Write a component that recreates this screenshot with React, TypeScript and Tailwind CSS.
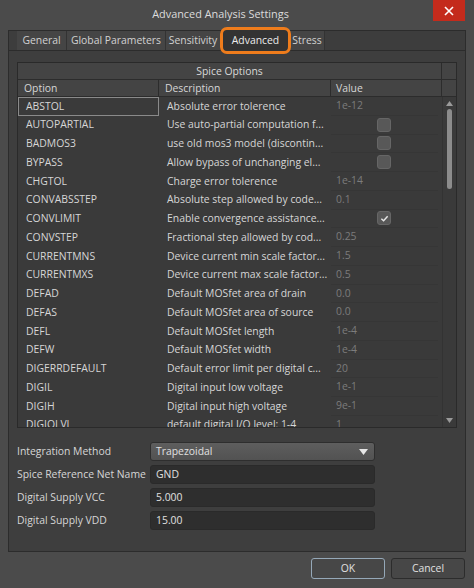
type Row = {
  name: string;
  desc: string;
  value?: string;
  check?: "on" | "off";
};

const rows: Row[] = [
  { name: "ABSTOL", desc: "Absolute error tolerence", value: "1e-12" },
  { name: "AUTOPARTIAL", desc: "Use auto-partial computation f...", check: "off" },
  { name: "BADMOS3", desc: "use old mos3 model (discontin...", check: "off" },
  { name: "BYPASS", desc: "Allow bypass of unchanging el...", check: "off" },
  { name: "CHGTOL", desc: "Charge error tolerence", value: "1e-14" },
  { name: "CONVABSSTEP", desc: "Absolute step allowed by code...", value: "0.1" },
  { name: "CONVLIMIT", desc: "Enable convergence assistance...", check: "on" },
  { name: "CONVSTEP", desc: "Fractional step allowed by cod...", value: "0.25" },
  { name: "CURRENTMNS", desc: "Device current min scale factor...", value: "1.5" },
  { name: "CURRENTMXS", desc: "Device current max scale factor...", value: "0.5" },
  { name: "DEFAD", desc: "Default MOSfet area of drain", value: "0.0" },
  { name: "DEFAS", desc: "Default MOSfet area of source", value: "0.0" },
  { name: "DEFL", desc: "Default MOSfet length", value: "1e-4" },
  { name: "DEFW", desc: "Default MOSfet width", value: "1e-4" },
  { name: "DIGERRDEFAULT", desc: "Default error limit per digital c...", value: "20" },
  { name: "DIGIL", desc: "Digital input low voltage", value: "1e-1" },
  { name: "DIGIH", desc: "Digital input high voltage", value: "9e-1" },
  { name: "DIGIOLVL", desc: "default digital I/O level: 1-4", value: "1" },
];

// tab label + fixed width, as measured off the dialog
const tabs: [string, string][] = [
  ["General", "w-[50px]"],
  ["Global Parameters", "w-[99px]"],
  ["Sensitivity", "w-[55px]"],
  ["Advanced", "w-[65px]"],
  ["Stress", "w-[35px]"],
];

function CheckBox({ on }: { on: boolean }) {
  return (
    <div className="w-[14px] h-[14px] rounded-[3px] bg-[#585858] border border-[#666] flex items-center justify-center">
      {on && (
        <svg width="9" height="9" viewBox="0 0 10 10" fill="none">
          <path d="M1.5 5.2 L4 7.5 L8.5 2.5" stroke="#e6e6e6" strokeWidth="1.6" />
        </svg>
      )}
    </div>
  );
}

export default function App() {
  return (
    <div
      className="w-[474px] h-[588px] bg-[#4b4b4b] flex flex-col text-[10.4px] text-[#d6d6d6] overflow-hidden"
      style={{ fontFamily: '"Open Sans", "Noto Sans", sans-serif' }}
    >
      {/* title bar */}
      <div className="h-[30px] flex items-start shrink-0">
        <div className="flex-1 text-center pt-[6px] text-[10.9px] text-[#dcdcdc] pl-[8px]">
          Advanced Analysis Settings
        </div>
        <div className="w-[32px] h-[21px] bg-[#c42b1c] flex items-center justify-center mr-[9px]">
          <svg width="10" height="10" viewBox="0 0 10 10">
            <path d="M1 1 L9 9 M9 1 L1 9" stroke="#fff" strokeWidth="1.6" />
          </svg>
        </div>
      </div>

      {/* tab strip */}
      <div className="mx-[8px] h-[20px] shrink-0 bg-[#3d3d3d] border-t border-x border-[#2c2c2c] flex items-stretch pl-[8px]">
        {tabs.map(([t, w]) => {
          const active = t === "Advanced";
          return active ? (
            <div
              key={t}
              className={`${w} relative ml-[2px] mr-[2px] -mt-[1px] -mb-[1px] flex items-center justify-center bg-[#333] text-[#ececec] outline-[3px] outline-[#ee7c1c] rounded-[4px] outline z-10`}
            >
              {t}
            </div>
          ) : (
            <div
              key={t}
              className={`${w} flex items-center justify-center bg-[#454545] border-r border-[#333] text-[#d2d2d2] whitespace-nowrap`}
            >
              {t}
            </div>
          );
        })}
      </div>

      {/* content panel */}
      <div className="mx-[8px] h-[502px] shrink-0 bg-[#3e3e3e] border border-[#2c2c2c] flex flex-col px-[8px] pt-[11px]">
        {/* table */}
        <div className="h-[366px] bg-[#3a3a3a] border border-[#2a2a2a] flex flex-col overflow-hidden">
          <div className="h-[17px] shrink-0 flex bg-[#444] border-b border-[#2c2c2c]">
            <div className="flex-1 text-center leading-[16px] text-[#d8d8d8] border-r border-[#2c2c2c]">
              Spice Options
            </div>
            <div className="w-[14px]" />
          </div>
          <div className="h-[17px] shrink-0 flex bg-[#444] border-b border-[#2c2c2c] leading-[16px]">
            <div className="w-[141px] pl-[6px] border-r border-[#2c2c2c]">Option</div>
            <div className="w-[172px] pl-[6px] border-r border-[#2c2c2c]">Description</div>
            <div className="flex-1 pl-[5px] border-r border-[#2c2c2c]">Value</div>
            <div className="w-[14px]" />
          </div>
          <div className="flex flex-1 min-h-0">
            <div className="flex-1 flex flex-col">
              {rows.map((r, i) => (
                <div key={r.name} className="h-[18.75px] shrink-0 flex items-center">
                  <div
                    className={
                      i === 0
                        ? "w-[141px] h-full pl-[7px] flex items-center border border-[#8a8a8a]"
                        : "w-[141px] h-full pl-[8px] flex items-center"
                    }
                  >
                    {r.name}
                  </div>
                  <div className="w-[172px] pl-[8px] whitespace-nowrap">{r.desc}</div>
                  <div className="flex-1 h-full pl-[5px] flex items-center border-b border-[#363636] mr-[4px]">
                    {r.check ? (
                      <div className="ml-[41px]">
                        <CheckBox on={r.check === "on"} />
                      </div>
                    ) : (
                      <span className="text-[#7c7c7c]">{r.value}</span>
                    )}
                  </div>
                </div>
              ))}
            </div>
            {/* scrollbar */}
            <div className="w-[14px] flex flex-col items-center border-l border-[#333] py-[4px]">
              <svg width="7" height="5" viewBox="0 0 7 5">
                <path d="M0 5 L3.5 0 L7 5 Z" fill="#9a9a9a" />
              </svg>
              <div className="w-[5px] h-[80px] mt-[3px] rounded-full bg-[#8c8c8c]" />
              <div className="flex-1" />
              <svg width="7" height="5" viewBox="0 0 7 5">
                <path d="M0 0 L7 0 L3.5 5 Z" fill="#9a9a9a" />
              </svg>
            </div>
          </div>
        </div>

        {/* settings form */}
        <div className="mt-[14px] flex flex-col gap-[4px]">
          <div className="flex items-center h-[19px]">
            <div className="w-[133px]">Integration Method</div>
            <div className="w-[225px] h-[19px] rounded-[3px] bg-gradient-to-b from-[#5e5e5e] to-[#525252] border border-[#2e2e2e] flex items-center justify-between pl-[5px] pr-[6px] text-[#e0e0e0]">
              <span>Trapezoidal</span>
              <svg width="9" height="6" viewBox="0 0 9 6">
                <path d="M0 0 L9 0 L4.5 6 Z" fill="#e6e6e6" />
              </svg>
            </div>
          </div>
          {[
            ["Spice Reference Net Name", "GND"],
            ["Digital Supply VCC", "5.000"],
            ["Digital Supply VDD", "15.00"],
          ].map(([label, val]) => (
            <div key={label} className="flex items-center h-[19px]">
              <div className="w-[133px] whitespace-nowrap">{label}</div>
              <div className="w-[225px] h-[19px] rounded-[3px] bg-[#2e2e2e] border border-[#2a2a2a] flex items-center pl-[5px] text-[#e0e0e0]">
                {val}
              </div>
            </div>
          ))}
        </div>
      </div>

      {/* buttons */}
      <div className="flex justify-end gap-[6px] mr-[9px] mt-[6px]">
        <button className="w-[74px] h-[21px] rounded-[3px] bg-[#474747] border border-[#95a8b8] text-[#e0e0e0]">
          OK
        </button>
        <button className="w-[74px] h-[21px] rounded-[3px] bg-[#474747] border border-[#2c2c2c] text-[#e0e0e0]">
          Cancel
        </button>
      </div>
    </div>
  );
}
